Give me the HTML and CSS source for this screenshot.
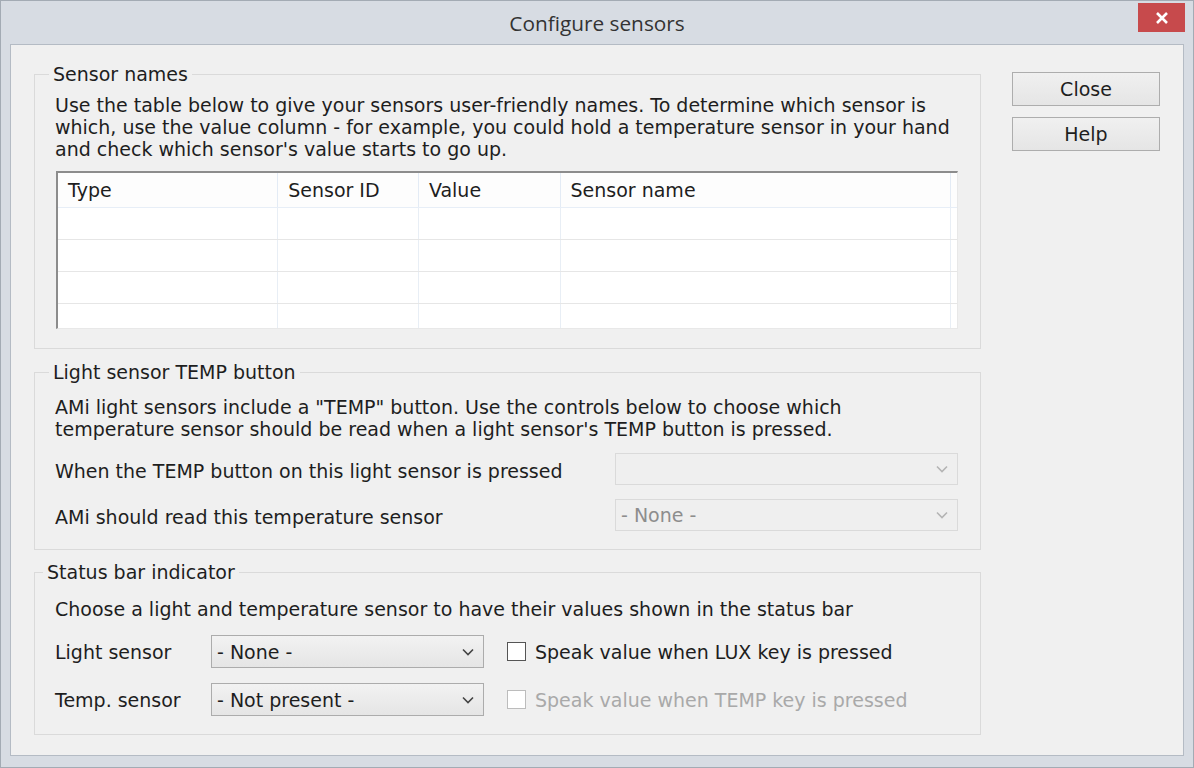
FILE: index.html
```html
<!DOCTYPE html>
<html lang="en">
<head>
    <meta charset="UTF-8">
    <title>Configure sensors</title>
    <link rel="stylesheet" href="styles.css">
</head>
<body>
    <div class="window">
        <div class="titlebar">
            <div class="title-spacer"></div>
            <div class="title">Configure sensors</div>
            <div class="title-spacer">
                <div class="close-x">
                    <svg width="14" height="14" viewBox="0 0 14 14"><path d="M2 2 L12 12 M12 2 L2 12" stroke="#fff" stroke-width="2.6" fill="none"/></svg>
                </div>
            </div>
        </div>

        <div class="client">
            <div class="groups">
                <fieldset class="group group-names">
                    <legend>Sensor names</legend>
                    <p class="text">Use the table below to give your sensors user-friendly names. To determine which sensor is<br>which, use the value column - for example, you could hold a temperature sensor in your hand<br>and check which sensor's value starts to go up.</p>
                    <div class="list">
                        <table>
                            <tr class="head">
                                <th class="c-type">Type</th>
                                <th class="c-id">Sensor ID</th>
                                <th class="c-val">Value</th>
                                <th class="c-name">Sensor name</th>
                                <th class="c-end"></th>
                            </tr>
                            <tr><td></td><td></td><td></td><td></td><td class="c-end"></td></tr>
                            <tr><td></td><td></td><td></td><td></td><td class="c-end"></td></tr>
                            <tr><td></td><td></td><td></td><td></td><td class="c-end"></td></tr>
                            <tr class="last"><td></td><td></td><td></td><td></td><td class="c-end"></td></tr>
                        </table>
                    </div>
                </fieldset>

                <fieldset class="group group-temp">
                    <legend>Light sensor TEMP button</legend>
                    <p class="text">AMi light sensors include a "TEMP" button. Use the controls below to choose which<br>temperature sensor should be read when a light sensor's TEMP button is pressed.</p>
                    <div class="row row-first">
                        <span class="label">When the TEMP button on this light sensor is pressed</span>
                        <div class="combo combo-wide disabled">
                            <span class="combo-text"></span>
                            <svg class="chev" width="12" height="8" viewBox="0 0 12 8"><path d="M1 1.5 L6 6.5 L11 1.5" stroke="#b4b4b4" stroke-width="1.6" fill="none"/></svg>
                        </div>
                    </div>
                    <div class="row">
                        <span class="label">AMi should read this temperature sensor</span>
                        <div class="combo combo-wide disabled">
                            <span class="combo-text">- None -</span>
                            <svg class="chev" width="12" height="8" viewBox="0 0 12 8"><path d="M1 1.5 L6 6.5 L11 1.5" stroke="#b4b4b4" stroke-width="1.6" fill="none"/></svg>
                        </div>
                    </div>
                </fieldset>

                <fieldset class="group group-status">
                    <legend>Status bar indicator</legend>
                    <p class="text">Choose a light and temperature sensor to have their values shown in the status bar</p>
                    <div class="row row-first">
                        <span class="label label-short">Light sensor</span>
                        <div class="combo combo-short">
                            <span class="combo-text">- None -</span>
                            <svg class="chev" width="12" height="8" viewBox="0 0 12 8"><path d="M1 1.5 L6 6.5 L11 1.5" stroke="#444" stroke-width="1.6" fill="none"/></svg>
                        </div>
                        <span class="check"></span>
                        <span class="check-label">Speak value when LUX key is pressed</span>
                    </div>
                    <div class="row">
                        <span class="label label-short">Temp. sensor</span>
                        <div class="combo combo-short">
                            <span class="combo-text">- Not present -</span>
                            <svg class="chev" width="12" height="8" viewBox="0 0 12 8"><path d="M1 1.5 L6 6.5 L11 1.5" stroke="#444" stroke-width="1.6" fill="none"/></svg>
                        </div>
                        <span class="check disabled"></span>
                        <span class="check-label disabled">Speak value when TEMP key is pressed</span>
                    </div>
                </fieldset>
            </div>

            <div class="buttons">
                <button class="btn">Close</button>
                <button class="btn">Help</button>
            </div>
        </div>
    </div>
</body>
</html>
```

FILE: styles.css
```css
body {
    margin: 0;
    font-family: "DejaVu Sans", "Open Sans", sans-serif;
    font-size: 19px;
    line-height: 22px;
    color: #1e1e1e;
}
.window {
    width: 1194px;
    height: 768px;
    box-sizing: border-box;
    background-color: #d7dce3;
    border: 1px solid #a3abb4;
    padding: 0 9px 11px 9px;
}
.titlebar {
    height: 43px;
    display: flex;
    margin: 0 -9px;
}
.title-spacer {
    flex: 1;
    display: flex;
    justify-content: flex-end;
}
.title {
    font-family: "Open Sans", sans-serif;
    font-size: 20.8px;
    color: #333;
    line-height: 44px;
}
.close-x {
    width: 47px;
    height: 29px;
    margin: 2px 8px 0 0;
    background-color: #c74a4c;
    display: flex;
    align-items: center;
    justify-content: center;
}
.client {
    height: 712px;
    box-sizing: border-box;
    background-color: #f0f0f0;
    border: 1px solid #b4bbc4;
    display: flex;
    align-items: flex-start;
}
.groups {
    width: 947px;
    margin: 18px 0 0 23px;
}
.group {
    margin: 0;
    padding: 0 22px 19px 20px;
    border: 1px solid #dadada;
    min-width: 0;
}
.group legend {
    margin-left: -6px;
    padding: 0 4px;
    line-height: 22px;
}
.group-temp {
    margin-top: 12px;
    padding-bottom: 18px;
}
.group-status {
    margin-top: 11px;
    padding-bottom: 18px;
}
.group-status legend {
    margin-left: -12px;
}
.text {
    margin: 0;
    line-height: 22px;
}
.group-names .text {
    padding-top: 9px;
}
.group-temp .text {
    padding-top: 13px;
}
.group-status .text {
    padding-top: 15px;
}

/* list view */
.list {
    margin: 11px 0 0 1px;
    width: 902px;
    height: 158px;
    box-sizing: border-box;
    background-color: #fff;
    border-top: 2px solid #8c8c8c;
    border-left: 2px solid #8c8c8c;
    border-right: 1px solid #e8e8e8;
    border-bottom: 1px solid #e8e8e8;
    overflow: hidden;
}
.list table {
    border-collapse: collapse;
    table-layout: fixed;
}
.list th {
    text-align: left;
    font-weight: normal;
    height: 34px;
    padding: 0 0 0 10px;
    border-right: 1px solid #e3ebf5;
    border-bottom: 1px solid #e7eef7;
    background-color: #fdfdfd;
    vertical-align: middle;
}
.list td {
    height: 31px;
    padding: 0;
    border-right: 1px solid #e8eef5;
    border-bottom: 1px solid #e6e6e6;
}
.list tr.last td {
    border-bottom: none;
}
.c-type { width: 210px; }
.c-id { width: 130px; }
.c-val { width: 131px; }
.c-name { width: 381px; }
.list .c-end {
    width: 6px;
    border-right: none;
    padding: 0;
}

/* rows with controls */
.row {
    display: flex;
    align-items: center;
    margin-top: 14px;
}
.row-first {
    margin-top: 13px;
}
.group-status .row {
    margin-top: 15px;
}
.label {
    flex: 1;
    padding-top: 4px;
}
.label-short {
    flex: none;
    width: 156px;
    padding-top: 0;
}
.combo {
    height: 32px;
    box-sizing: border-box;
    border: 1px solid #acacac;
    background: linear-gradient(#f2f2f2, #e5e5e5);
    display: flex;
    align-items: center;
    padding: 0 9px 0 5px;
}
.combo.disabled {
    background: #efefef;
    border-color: #dadada;
    color: #8d8d8d;
}
.combo-text {
    flex: 1;
}
.combo-wide {
    width: 343px;
}
.combo-short {
    width: 273px;
    height: 33px;
}
.check {
    width: 19px;
    height: 19px;
    box-sizing: border-box;
    border: 1px solid #555;
    background-color: #fff;
    margin-left: 23px;
}
.check.disabled {
    border-color: #bcbcbc;
}
.check-label {
    margin-left: 9px;
}
.check-label.disabled {
    color: #a9a9a9;
}

/* side buttons */
.buttons {
    display: flex;
    flex-direction: column;
    gap: 11px;
    margin: 27px 0 0 31px;
}
.btn {
    width: 148px;
    height: 34px;
    font-family: inherit;
    font-size: 19px;
    color: #1e1e1e;
    border: 1px solid #adadad;
    background: linear-gradient(#f0f0f0, #e5e5e5);
    padding: 0;
}
```
